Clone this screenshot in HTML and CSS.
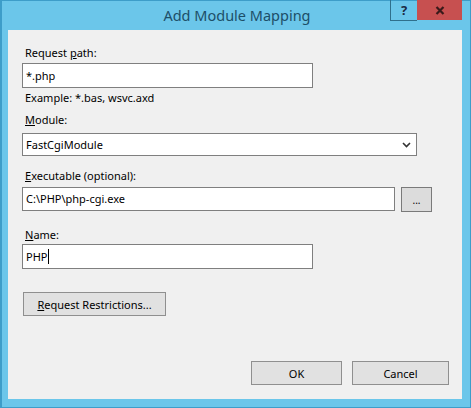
FILE: index.html
```html
<!DOCTYPE html>
<html>
<head>
<meta charset="utf-8">
<link rel="stylesheet" href="styles.css">
</head>
<body>
<div class="window">
  <div class="titlebar">
    <div class="spacer"></div>
    <div class="title">Add Module Mapping</div>
    <div class="caption-btns">
      <div class="cap help">?</div>
      <div class="cap close">
        <svg width="10" height="9" viewBox="0 0 10 9"><path d="M1.5 1 L8.5 8 M8.5 1 L1.5 8" stroke="#3a1a1a" stroke-width="2.2" fill="none"/></svg>
      </div>
    </div>
  </div>
  <div class="content">
    <div class="label l-first">Request <u>p</u>ath:</div>
    <div class="field w-short">*.php</div>
    <div class="hint">Example: *.bas, wsvc.axd</div>
    <div class="label l-module"><u>M</u>odule:</div>
    <div class="field select w-long">
      <span>FastCgiModule</span>
      <svg class="chev" width="9" height="6" viewBox="0 0 9 6"><path d="M1 1 L4.5 4.5 L8 1" stroke="#333" stroke-width="1.6" fill="none"/></svg>
    </div>
    <div class="label l-exec"><u>E</u>xecutable (optional):</div>
    <div class="row">
      <div class="field w-exec">C:\PHP\php-cgi.exe</div>
      <div class="btn browse">...</div>
    </div>
    <div class="label l-name"><u>N</u>ame:</div>
    <div class="field w-short">PHP<span class="caret"></span></div>
    <div class="btn restrict"><u>R</u>equest Restrictions...</div>
    <div class="footer">
      <div class="btn ok">OK</div>
      <div class="btn cancel">Cancel</div>
    </div>
  </div>
</div>
</body>
</html>
```
FILE: styles.css
```css
html, body {
  margin: 0;
  padding: 0;
  background: #6bc6ea;
}
.window {
  width: 471px;
  height: 408px;
  box-sizing: border-box;
  border: 1px solid #3d9dc9;
  border-left-width: 2px;
  background: #6bc6ea;
  padding: 0 8px 8px 6px;
  display: flex;
  flex-direction: column;
  font-family: "Noto Sans", "Segoe UI", sans-serif;
  font-size: 11px;
  color: #000;
}
.titlebar {
  height: 29px;
  display: grid;
  grid-template-columns: 1fr auto 1fr;
  align-items: start;
  flex: none;
}
.title {
  font-size: 14.5px;
  line-height: 29px;
  color: #1d4f68;
  padding-left: 4px;
}
.caption-btns {
  display: flex;
  justify-content: flex-end;
  margin-top: -1px;
}
.cap {
  height: 21px;
  box-sizing: border-box;
  display: flex;
  align-items: center;
  justify-content: center;
}
.help {
  width: 27px;
  border-left: 1px solid #2f6f8c;
  border-bottom: 1px solid #2f6f8c;
  font-weight: bold;
  font-size: 13px;
  color: #1b2b44;
}
.close {
  width: 45px;
  height: 20px;
  background: #c75050;
}
.content {
  flex: 1;
  background: #f0f0f0;
  padding: 15px 13px 14px 14px;
  display: flex;
  flex-direction: column;
  align-items: flex-start;
}
.label {
  line-height: 15px;
  padding-left: 3px;
  margin-bottom: 3px;
}
.l-module { margin-top: 7px; margin-bottom: 6px; }
.l-exec { margin-top: 12px; margin-bottom: 2px; }
.l-name { margin-top: 15px; margin-bottom: 2px; }
.field {
  box-sizing: border-box;
  height: 25px;
  background: #fff;
  border: 1px solid #7f7f7f;
  padding: 0 3px;
  line-height: 23px;
  white-space: nowrap;
  display: flex;
  align-items: center;
}
.w-short { width: 291px; }
.w-long { width: 395px; height: 23px; }
.w-exec { width: 373px; height: 24px; }
.select {
  justify-content: space-between;
  padding-right: 5px;
}
.chev { display: block; }
.hint {
  line-height: 15px;
  padding-left: 3px;
  margin-top: 2px;
}
.row {
  display: flex;
  align-items: center;
  gap: 6px;
}
.btn {
  box-sizing: border-box;
  height: 24px;
  background: #e1e1e1;
  border: 1px solid #8f8f8f;
  display: flex;
  align-items: center;
  justify-content: center;
  white-space: nowrap;
}
.browse {
  width: 31px;
  height: 25px;
  margin-top: 2px;
  font-size: 10px;
  background: #dcdcdc;
  border-color: #7a7a7a;
}
.caret {
  display: inline-block;
  width: 1px;
  height: 15px;
  background: #000;
  margin-left: 1px;
}
.restrict {
  width: 143px;
  margin-top: 23px;
  margin-left: 1px;
}
.footer {
  margin-top: auto;
  align-self: flex-end;
  display: flex;
  gap: 10px;
}
.ok { width: 91px; }
.cancel { width: 97px; }
```
